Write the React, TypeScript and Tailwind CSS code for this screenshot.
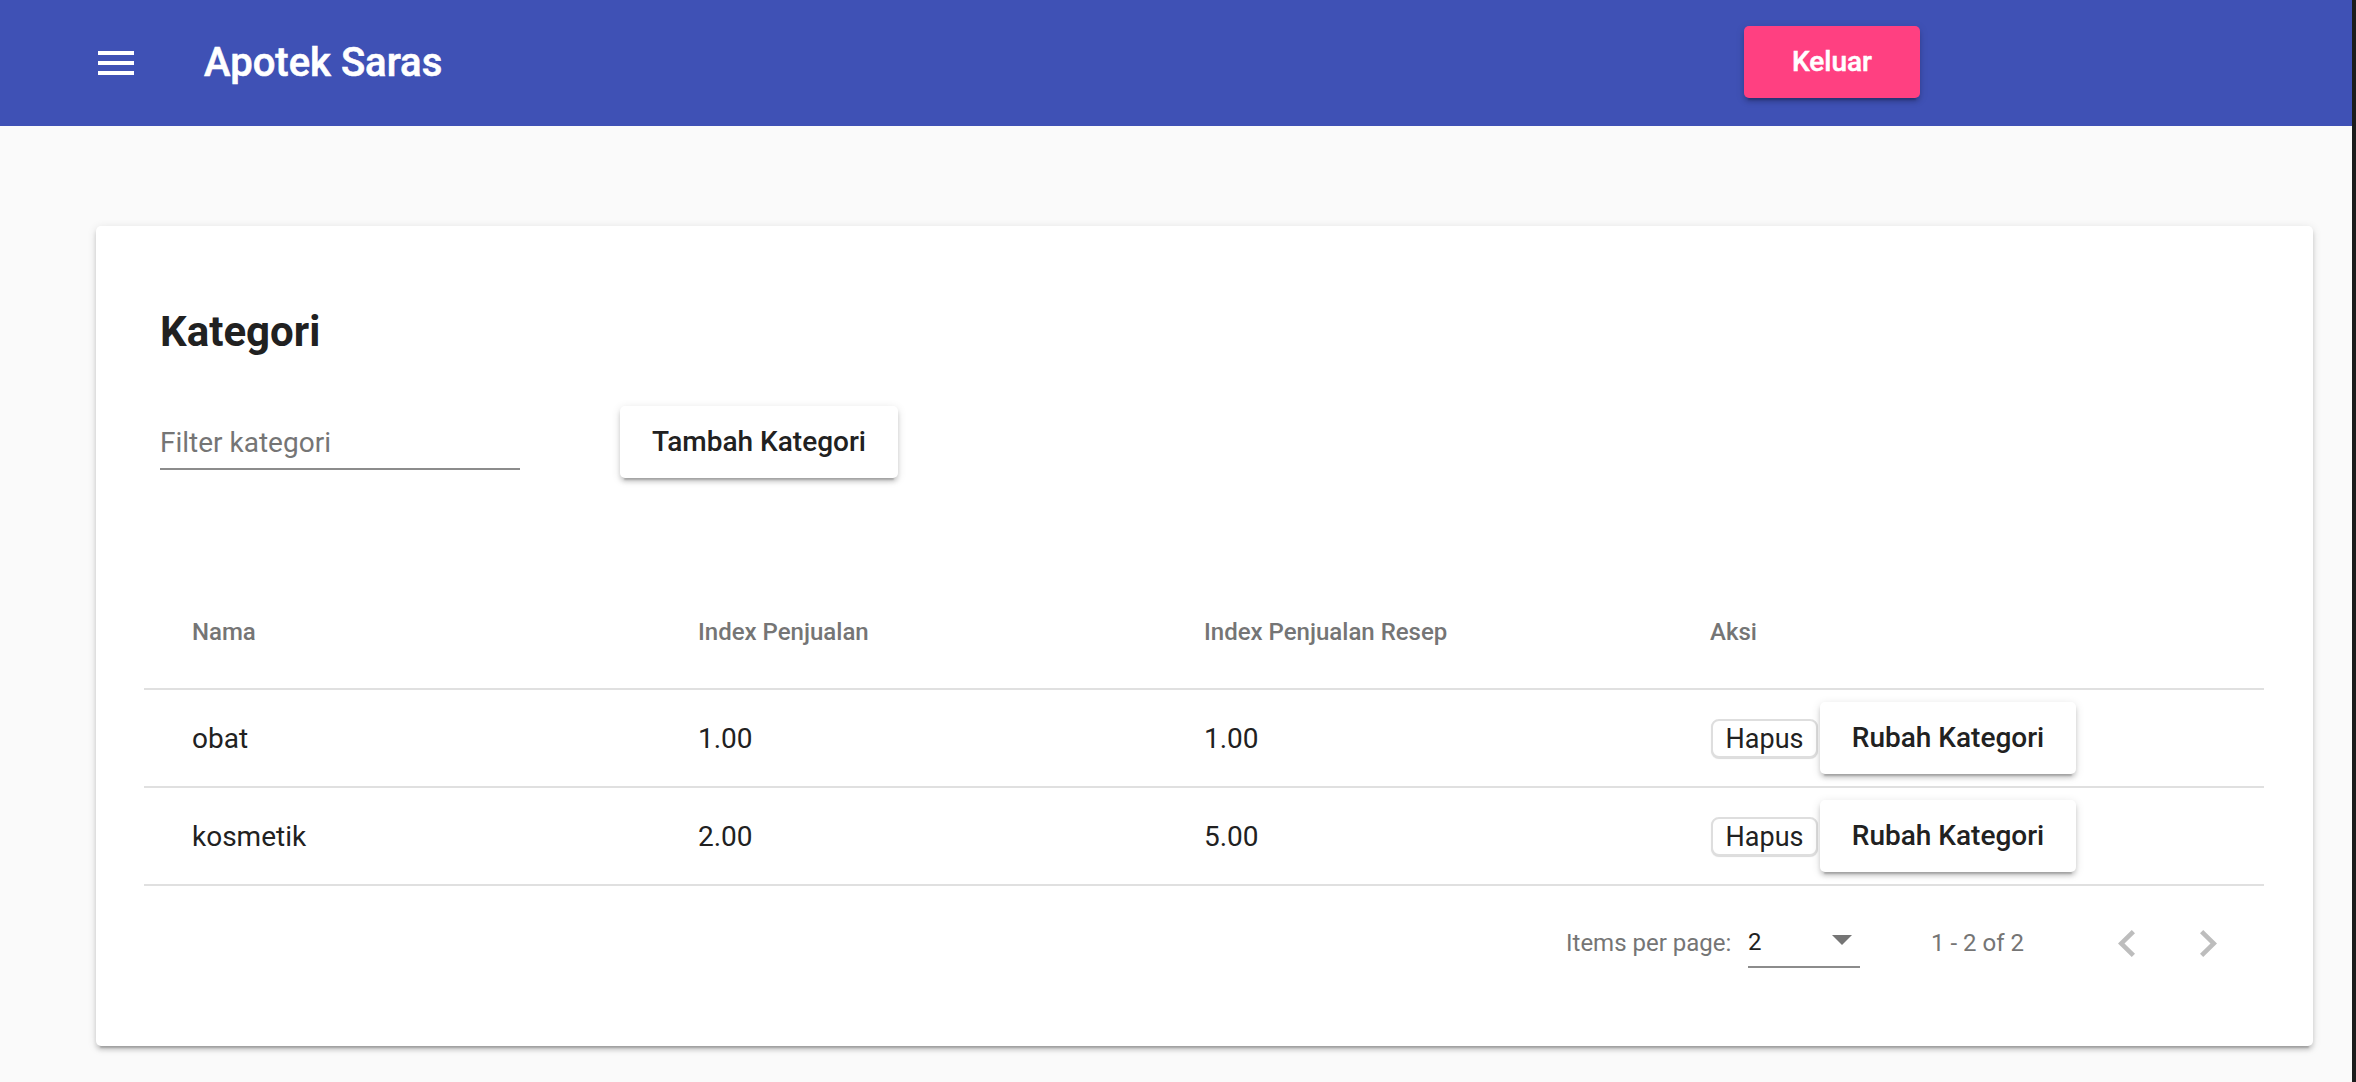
const font = "font-['Roboto',sans-serif]"

const raisedShadow = "shadow-[0_6px_2px_-4px_rgba(0,0,0,0.2),0_4px_4px_0_rgba(0,0,0,0.14),0_2px_10px_0_rgba(0,0,0,0.12)]"

const raisedButton = `h-[72px] rounded-[5px] bg-white text-[28px] font-medium text-[#212121] ${raisedShadow}`

const rows = [
  { name: "obat", sale: "1.00", recipe: "1.00" },
  { name: "kosmetik", sale: "2.00", recipe: "5.00" },
]

const App = () => {
  return (
    <div className={`flex min-h-screen bg-[#1c1c1c] ${font}`}>
      <div className="min-h-screen w-[2352px] shrink-0 bg-[#fafafa]">
        {/* Toolbar */}
        <header className="flex h-[126px] items-center bg-[#3f51b5] pl-[98px]">
          <div className="flex h-6 w-9 flex-col justify-between">
            <span className="h-1 bg-white" />
            <span className="h-1 bg-white" />
            <span className="h-1 bg-white" />
          </div>
          <h1 className="ml-[70px] w-[1540px] text-[40px] font-medium leading-none text-white [-webkit-text-stroke:0.6px_white]">
            Apotek Saras
          </h1>
          <button className={`mb-0.5 h-[72px] w-[176px] rounded-[5px] bg-[#ff4081] text-[28px] font-medium text-white [-webkit-text-stroke:0.5px_white] ${raisedShadow}`}>
            Keluar
          </button>
        </header>

        {/* Card */}
        <main className={`ml-[96px] mt-[100px] h-[820px] w-[2217px] rounded-[5px] bg-white pl-[64px] pt-[76px] ${raisedShadow}`}>
          <h2 className="text-[42px] font-bold leading-[60px] text-[#212121]">Kategori</h2>

          <div className="mt-[44px] flex items-start">
            <div className="flex h-[64px] w-[360px] items-center border-b-2 border-[#8c8c8c] pt-3">
              <input
                placeholder="Filter kategori"
                className="w-full bg-transparent text-[28px] text-[#212121] outline-none placeholder:text-[#757575]"
              />
            </div>
            <button className={`ml-[100px] w-[278px] ${raisedButton}`}>Tambah Kategori</button>
          </div>

          {/* Table */}
          <div className="-ml-4 mt-[100px] w-[2120px]">
            <div className="grid h-[112px] grid-cols-4 items-center border-b-2 border-[#e0e0e0] px-12 pb-[3px] text-2xl font-medium text-[#757575]">
              <span>Nama</span>
              <span>Index Penjualan</span>
              <span>Index Penjualan Resep</span>
              <span>Aksi</span>
            </div>
            {rows.map((row) => (
              <div
                key={row.name}
                className="grid h-[98px] grid-cols-4 items-center border-b-2 border-[#e0e0e0] px-12 text-[28px] text-[#212121]"
              >
                <span className="pt-0.5">{row.name}</span>
                <span className="pt-0.5">{row.sale}</span>
                <span className="pt-0.5">{row.recipe}</span>
                <div className="flex items-center pl-px">
                  <button className="h-[39px] w-[107px] rounded-lg border-2 border-[#dedede] bg-white pt-0.5 text-[27px] leading-none text-[#212121] shadow-[0_1px_1px_rgba(0,0,0,0.15)]">
                    Hapus
                  </button>
                  <button className={`ml-0.5 w-[256px] ${raisedButton}`}>Rubah Kategori</button>
                </div>
              </div>
            ))}

            {/* Pagination */}
            <div className="flex h-[112px] items-center pl-[1422px] pt-0.5 text-2xl text-[#757575]">
              <span className="w-[182px]">Items per page:</span>
              <div className="flex h-[50px] w-[112px] items-center justify-between border-b-2 border-[#8c8c8c] pr-2 pb-1">
                <span className="pt-1 text-2xl text-[#212121]">2</span>
                <span className="h-0 w-0 border-x-[10px] border-t-[10px] border-x-transparent border-t-[#757575]" />
              </div>
              <span className="ml-[71px] w-[187px]">1 - 2 of 2</span>
              <svg width="17" height="27" viewBox="8 6 7.41 12" preserveAspectRatio="none" fill="#bdbdbd">
                <path d="M15.41 7.41 14 6l-6 6 6 6 1.41-1.41L10.83 12z" />
              </svg>
              <svg width="17" height="27" viewBox="8.59 6 7.41 12" preserveAspectRatio="none" fill="#bdbdbd" className="ml-[65px]">
                <path d="M10 6 8.59 7.41 13.17 12l-4.58 4.59L10 18l6-6z" />
              </svg>
            </div>
          </div>
        </main>
      </div>
    </div>
  )
}

export default App
